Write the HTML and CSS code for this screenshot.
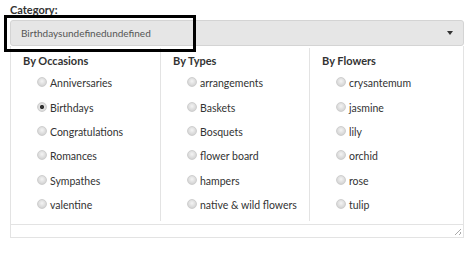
FILE: index.html
```html
<!DOCTYPE html>
<html lang="en">
<head>
  <meta charset="UTF-8" />
  <title>Category</title>
  <link rel="stylesheet" href="styles.css">
</head>
<body>
  <div class="field">
    <label class="field-label">Category:</label>
    <div class="select">
      <span class="select-value">Birthdaysundefinedundefined</span>
      <span class="select-caret"></span>
    </div>
    <div class="highlight"></div>

    <div class="dropdown">
      <div class="columns">
        <div class="col">
          <h4>By Occasions</h4>
          <label class="opt"><input type="radio" name="cat"> Anniversaries</label>
          <label class="opt"><input type="radio" name="cat" checked> Birthdays</label>
          <label class="opt"><input type="radio" name="cat"> Congratulations</label>
          <label class="opt"><input type="radio" name="cat"> Romances</label>
          <label class="opt"><input type="radio" name="cat"> Sympathes</label>
          <label class="opt"><input type="radio" name="cat"> valentine</label>
        </div>
        <div class="col">
          <h4>By Types</h4>
          <label class="opt"><input type="radio" name="cat"> arrangements</label>
          <label class="opt"><input type="radio" name="cat"> Baskets</label>
          <label class="opt"><input type="radio" name="cat"> Bosquets</label>
          <label class="opt"><input type="radio" name="cat"> flower board</label>
          <label class="opt"><input type="radio" name="cat"> hampers</label>
          <label class="opt"><input type="radio" name="cat"> native &amp; wild flowers</label>
        </div>
        <div class="col">
          <h4>By Flowers</h4>
          <label class="opt"><input type="radio" name="cat"> crysantemum</label>
          <label class="opt"><input type="radio" name="cat"> jasmine</label>
          <label class="opt"><input type="radio" name="cat"> lily</label>
          <label class="opt"><input type="radio" name="cat"> orchid</label>
          <label class="opt"><input type="radio" name="cat"> rose</label>
          <label class="opt"><input type="radio" name="cat"> tulip</label>
        </div>
      </div>
      <div class="dropdown-foot"></div>
    </div>
  </div>
</body>
</html>
```

FILE: styles.css
```css
body {
  margin: 0;
  padding: 4px 10px 0 10px;
  font-family: Lato, "Open Sans", sans-serif;
  font-size: 10.5px;
  color: #333;
  background-color: #fff;
}
.field {
  position: relative;
  width: 454px;
}
.field-label {
  display: block;
  font-weight: bold;
  font-size: 11px;
  height: 16px;
  line-height: 12px;
}
.select {
  display: flex;
  align-items: center;
  justify-content: space-between;
  height: 24px;
  padding: 0 10px 0 10px;
  background-color: #e6e6e6;
  border: 1px solid #d4d4d4;
  border-radius: 3px;
}
.select-value {
  color: #555;
  font-size: 10px;
}
.select-caret {
  width: 0;
  height: 0;
  border-left: 3px solid transparent;
  border-right: 3px solid transparent;
  border-top: 4px solid #333;
}
.highlight {
  position: absolute;
  left: -6px;
  top: 11px;
  width: 186px;
  height: 31px;
  border: 3px solid #000;
}
.dropdown {
  border: 1px solid #e3e3e3;
  border-top: none;
}
.columns {
  display: grid;
  grid-template-columns: 150px 149px 1fr;
  padding-top: 2px;
}
.col {
  padding: 6px 0 4px 12px;
  border-right: 1px solid #e3e3e3;
}
.col:last-child {
  border-right: none;
}
.col h4 {
  margin: 0 0 3px 0;
  font-size: 11px;
  font-weight: bold;
  line-height: 14px;
}
.opt {
  display: flex;
  align-items: center;
  height: 24.4px;
  padding-left: 14px;
}
.opt input {
  appearance: none;
  -webkit-appearance: none;
  width: 10px;
  height: 10px;
  margin: 0 3px 2px 0;
  border-radius: 50%;
  background: radial-gradient(circle at 50% 40%, #f4f4f4 0%, #d6d6d6 70%, #bdbdbd 100%);
  border: 1px solid #cfcfcf;
  box-sizing: border-box;
}
.opt input:checked {
  background: radial-gradient(circle, #333 0%, #333 32%, #e4e4e4 42%, #cfcfcf 100%);
}
.dropdown-foot {
  height: 12px;
  margin-top: 3px;
  border-top: 1px solid #e3e3e3;
  position: relative;
}
.dropdown-foot::after {
  content: "";
  position: absolute;
  right: 2px;
  bottom: 2px;
  width: 6px;
  height: 6px;
  background: linear-gradient(135deg, transparent 45%, #aaa 45%, #aaa 55%, transparent 55%, transparent 75%, #aaa 75%, #aaa 85%, transparent 85%);
}
```
